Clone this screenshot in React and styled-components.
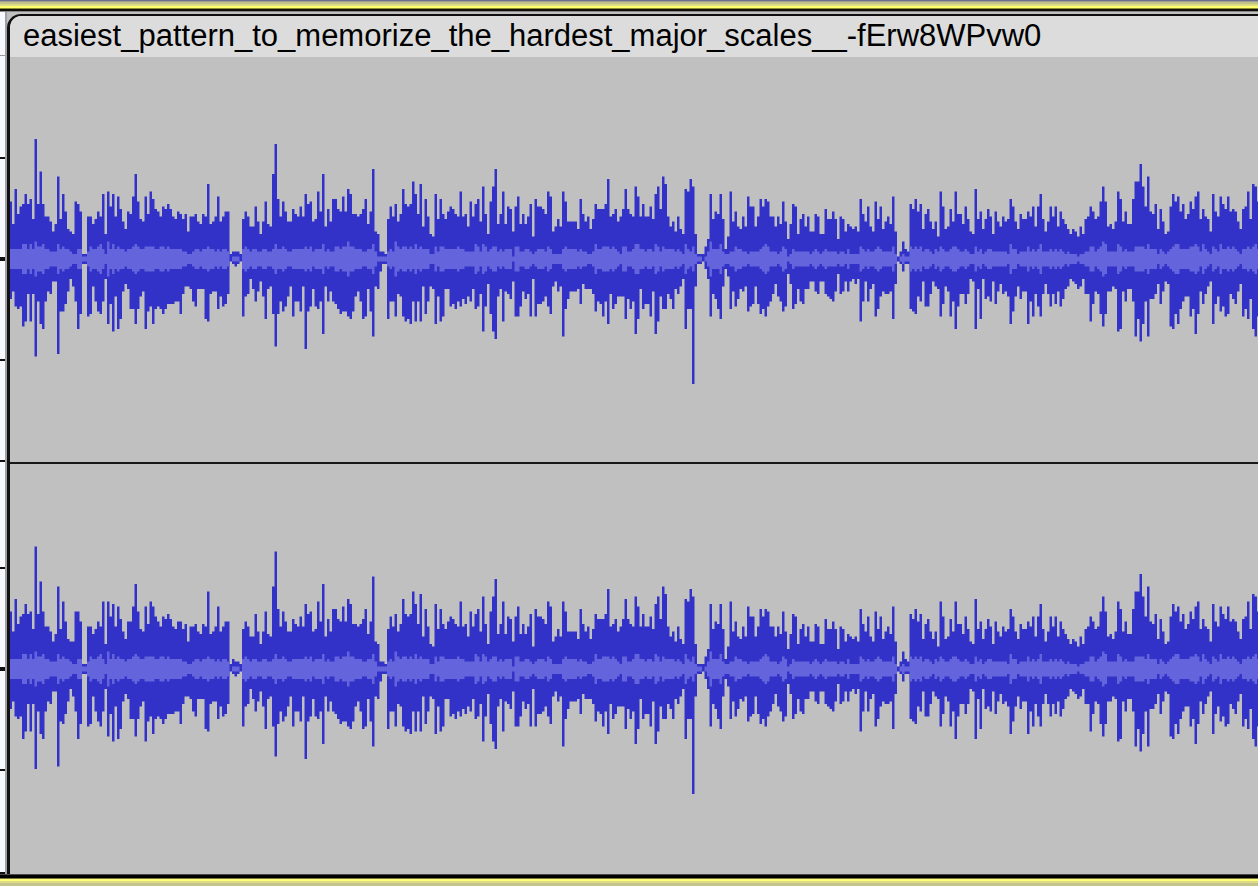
import styled, { createGlobalStyle } from "styled-components";

const GlobalStyle = createGlobalStyle`
    body {
        margin: 0;
        background: #c0c0c0;
    }
`;

// one column per sample block, in steps above the zero line
const peaks = [
    23,14,28,18,21,22,26,22,24,16,48,22,35,22,17,17,15,11,14,33,16,26,19,12,11,
    10,23,22,19,2,2,17,17,14,16,19,17,26,10,27,21,26,17,25,20,15,12,19,18,25,
    34,23,16,15,25,18,27,24,20,19,17,21,20,22,20,17,16,19,18,16,18,11,17,17,18,
    15,14,18,17,30,14,15,17,25,15,17,19,19,2,3,3,3,2,16,19,17,13,13,21,15,
    10,15,23,14,13,34,46,24,17,23,19,15,15,20,18,17,21,17,26,22,23,15,16,27,19,
    34,13,20,15,24,24,20,19,25,19,28,26,18,18,17,18,20,24,14,19,36,11,10,3,3,
    2,16,21,17,22,15,18,28,22,21,22,31,26,18,30,13,24,17,10,9,26,16,24,18,16,
    19,21,20,18,17,27,17,18,13,23,17,22,24,15,29,18,10,23,29,36,14,18,27,14,21,
    20,11,21,25,14,18,14,17,22,9,24,21,21,20,18,27,25,11,13,16,13,27,23,15,15,
    15,15,12,24,18,15,17,12,16,22,20,20,20,22,32,17,18,20,15,17,20,28,20,18,17,
    29,25,17,22,17,17,21,16,26,29,20,33,30,17,13,15,11,17,12,10,28,27,32,29,10,
    2,2,2,5,8,26,16,19,18,26,16,4,9,27,15,19,13,12,17,13,25,21,21,13,17,
    24,21,24,23,17,17,13,17,14,23,15,8,14,22,21,10,16,18,13,17,11,11,18,17,10,
    10,20,16,16,19,16,8,17,16,11,14,13,12,13,11,24,18,15,21,13,11,23,16,21,12,
    15,17,14,25,11,1,3,7,4,3,22,20,24,19,22,12,18,20,15,12,15,9,27,21,12,
    13,20,15,27,18,18,14,21,16,11,10,28,16,19,12,16,20,17,10,19,15,13,17,15,16,
    24,21,15,12,18,16,16,19,17,21,13,21,26,16,11,15,21,17,21,13,19,16,14,12,10,
    12,11,9,13,10,16,17,21,19,16,17,23,29,23,13,14,12,15,27,24,15,19,14,14,24,
    31,31,38,29,21,33,19,18,22,12,20,15,10,11,21,26,23,25,19,22,16,18,23,20,25,
    27,16,20,17,16,11,26,19,17,25,22,20,25,19,20,19,15,12,20,21,27,16,30,29,23,
];

// steps below the zero line
const troughs = [
    16,13,19,20,19,27,25,14,25,14,39,17,26,28,17,13,14,9,9,38,21,21,18,13,8,
    11,17,28,22,2,2,23,22,11,17,21,22,17,8,26,18,29,15,28,24,13,10,12,20,20,
    26,20,15,13,28,21,19,26,20,19,20,22,20,18,18,18,17,17,22,14,11,11,12,17,19,
    12,12,12,24,25,14,13,13,20,15,19,18,14,1,2,3,2,1,23,15,14,8,12,17,13,
    9,15,24,12,11,22,35,22,17,21,19,15,11,23,17,17,21,11,36,21,19,12,19,20,17,
    30,11,17,13,17,18,20,22,21,21,23,24,21,15,13,17,24,23,12,21,31,11,12,5,2,
    2,24,17,17,23,14,15,23,25,24,26,17,25,17,25,11,22,17,11,12,26,15,25,23,12,
    12,19,18,20,17,19,16,18,15,17,12,20,19,14,29,19,10,22,29,32,15,12,25,13,14,
    16,9,23,23,19,13,16,14,23,8,23,18,18,17,15,19,22,11,9,13,11,31,20,16,13,
    13,13,12,18,10,12,12,12,14,21,17,18,23,17,26,14,20,18,15,15,15,24,16,20,17,
    30,24,12,20,18,18,23,13,30,25,15,20,20,14,16,20,12,14,11,8,28,20,20,50,11,
    2,2,1,4,8,23,14,16,20,24,11,4,7,20,13,19,16,12,13,11,21,19,18,11,18,
    22,20,23,19,17,14,10,15,17,21,19,6,10,20,18,12,17,18,12,12,9,9,13,14,9,
    9,14,15,16,17,13,6,14,13,9,13,9,8,10,8,25,17,9,17,12,10,23,20,15,13,
    14,14,13,24,10,1,2,5,2,2,20,21,22,15,17,9,19,19,14,9,11,12,23,18,11,
    13,23,17,28,19,14,14,18,14,8,9,28,12,24,8,16,15,17,9,18,13,10,14,13,15,
    26,21,15,11,16,13,13,26,17,23,14,19,23,14,10,14,19,14,18,13,19,16,12,11,8,
    9,10,12,11,8,14,14,25,18,13,14,22,27,22,13,13,11,12,29,28,13,17,12,12,17,
    31,24,33,26,17,31,16,16,14,10,18,13,9,10,27,28,22,26,20,17,15,15,23,20,30,
    22,13,18,14,11,9,26,18,15,21,19,23,22,14,16,18,13,10,23,20,24,16,28,31,23,
];

// RMS band, same distance both ways
const rms = [
    4,4,4,4,4,6,6,4,6,4,7,5,5,6,4,4,3,3,3,6,4,5,4,4,3,
    2,2,4,4,1,1,3,5,4,4,5,6,4,2,7,4,6,4,5,4,4,3,4,4,5,
    6,5,4,4,5,5,5,5,4,4,5,5,4,5,4,4,4,4,4,3,3,2,2,3,4,
    4,3,4,4,5,4,4,3,4,3,4,4,3,0,1,1,1,0,4,5,4,3,4,4,3,
    3,4,4,3,3,4,6,4,4,5,4,3,3,4,4,4,4,4,5,4,5,3,4,4,4,
    6,3,4,3,3,5,5,4,5,5,7,5,5,4,4,4,3,3,4,4,6,3,1,1,1,
    1,3,4,3,7,5,4,5,5,4,5,4,6,4,5,4,4,4,2,2,5,3,5,5,4,
    4,4,4,4,5,4,4,3,3,3,3,6,5,3,6,5,3,4,5,5,3,4,3,4,4,
    4,1,5,5,3,3,4,4,3,2,3,4,4,4,3,5,4,2,2,2,2,4,5,4,4,
    4,4,3,4,3,3,2,2,3,6,4,4,5,5,5,4,5,4,3,2,5,5,3,3,4,
    6,6,4,4,3,4,4,3,6,5,3,5,4,4,4,4,3,4,3,2,6,4,3,5,2,
    1,1,0,1,3,7,4,4,4,6,3,2,2,3,3,5,4,4,3,3,2,3,3,3,3,
    4,5,6,5,3,3,3,2,3,5,4,1,2,4,3,3,3,3,3,3,2,3,4,3,2,
    3,4,3,3,3,3,2,3,3,2,4,2,2,2,2,5,4,3,4,3,3,4,5,4,3,
    3,3,3,5,2,0,1,2,1,1,5,4,5,4,5,3,4,4,3,2,4,3,5,4,3,
    3,4,5,5,4,3,3,4,3,2,2,5,3,4,2,3,4,4,3,3,3,3,3,3,2,
    6,4,4,2,3,3,3,5,3,4,3,4,6,3,3,3,4,3,4,3,4,3,2,3,2,
    2,2,1,2,2,3,3,5,5,3,4,5,7,6,3,3,3,3,6,5,3,4,3,3,3,
    5,5,5,5,4,6,4,4,4,2,4,3,2,3,4,5,6,6,4,4,4,4,5,5,6,
    5,3,6,4,3,2,5,4,3,6,4,4,5,4,5,4,3,2,4,4,5,4,5,6,4,
];

// the right channel only departs from the left in a few columns
const rightPeaks = { 1: 15, 8: 23, 10: 49, 13: 23, 21: 27, 25: 11, 27: 23, 37: 27, 47: 19, 48: 19, 57: 25, 58: 21, 59: 19, 68: 19, 79: 31, 89: 4, 98: 22, 105: 33, 106: 47, 145: 37 };
const rightTroughs = { 5: 28, 10: 40, 19: 39, 21: 22, 36: 23, 39: 27, 50: 27, 54: 29, 105: 23 };

const STEP = 2.5;

const band = (up, down) => {
    const top = up.map((v, i) => `V${-v}H${i + 1}`).join("");
    const bottom = down.map((v, i) => `V${v}H${i}`).reverse().join("");
    return `M0 0${top}${bottom}Z`;
};

const TrackFrame = styled.main`
    display: flex;
    flex-direction: column;
    width: 100%;
    overflow: hidden;
`;

const FocusEdge = styled.div`
    height: 12px;
    background: ${({ $bottom }) => $bottom
        ? "linear-gradient(#484848 0 1px, #000 1px 4px, #77773c 4px 5px, #ffff7c 5px 7px, #dcdc84 7px 9px, #c4c48c 9px)"
        : "linear-gradient(#6c6c90 0 1px, #a0a08c 1px 2px, #c0c088 2px 4px, #dcdc80 4px 6px, #ffff70 6px 8px, #8c8c30 8px 9px, #101008 9px 11px, #888 11px)"};
`;

const TrackBody = styled.div`
    display: flex;
    background: #c0c0c0;
`;

const Ruler = styled.div`
    flex: none;
    display: flex;
    flex-direction: column;
    width: 7px;
    box-sizing: border-box;
    border-right: 2px solid #a0a0a4;
    background: #f8f8ff;
`;

const Scale = styled.svg`
    display: block;
    width: 100%;
    height: 100%;
`;

const Clip = styled.section`
    flex: 1;
    min-width: 0;
    margin-top: 2px;
    border-left: 3px solid #101010;
    border-top: 2px solid #101010;
    border-top-left-radius: 14px;
    overflow: hidden;
`;

const ClipTitle = styled.h1`
    height: 41px;
    margin: 0;
    padding-left: 13px;
    background: #dcdcdc;
    color: #000;
    font: 400 31px/40px "Liberation Sans", Arial, sans-serif;
    white-space: nowrap;
`;

const Channel = styled.div`
    height: ${({ $height }) => $height}px;
    background: #c0c0c0;
    & + & {
        margin-top: 1px;
        border-top: 2px solid #181818;
    }
`;

const Wave = styled.svg`
    display: block;
    width: 100%;
    height: 100%;
`;

const Waveform = ({ label, height, up, down }) => {
    const rows = height / STEP;

    return (
        <Wave viewBox={`0.2 ${-rows / 2} 499.2 ${rows}`} preserveAspectRatio="none" role="img" aria-label={label}>
            <path d={band(up, down)} fill="#3232c8" />
            <path d={band(rms, rms)} fill="#6464dc" />
        </Wave>
    );
};

const ticks = [
    { y: 43, weight: 1, color: "#999" },
    { y: 145, weight: 2 },
    { y: 245, weight: 4 },
    { y: 347, weight: 2 },
    { y: 448, weight: 2 },
    { y: 555, weight: 2 },
    { y: 655, weight: 4 },
    { y: 757, weight: 2 },
    { y: 860, weight: 2 },
];

const App = () => {
    const rightUp = peaks.map((v, i) => rightPeaks[i] ?? v);
    const rightDown = troughs.map((v, i) => rightTroughs[i] ?? v);

    return (
        <>
            <GlobalStyle />
            <TrackFrame>
                <FocusEdge />
                <TrackBody>
                    <Ruler>
                        <Scale aria-hidden="true">
                            {ticks.map(({ y, weight, color = "#101010" }) => (
                                <rect key={y} y={y} width="100%" height={weight} fill={color} />
                            ))}
                        </Scale>
                    </Ruler>
                    <Clip>
                        <ClipTitle>easiest_pattern_to_memorize_the_hardest_major_scales__-fErw8WPvw0</ClipTitle>
                        <Channel $height={404}>
                            <Waveform label="Left channel" height={404} up={peaks} down={troughs} />
                        </Channel>
                        <Channel $height={410}>
                            <Waveform label="Right channel" height={410} up={rightUp} down={rightDown} />
                        </Channel>
                    </Clip>
                </TrackBody>
                <FocusEdge $bottom />
            </TrackFrame>
        </>
    );
};

export default App;
